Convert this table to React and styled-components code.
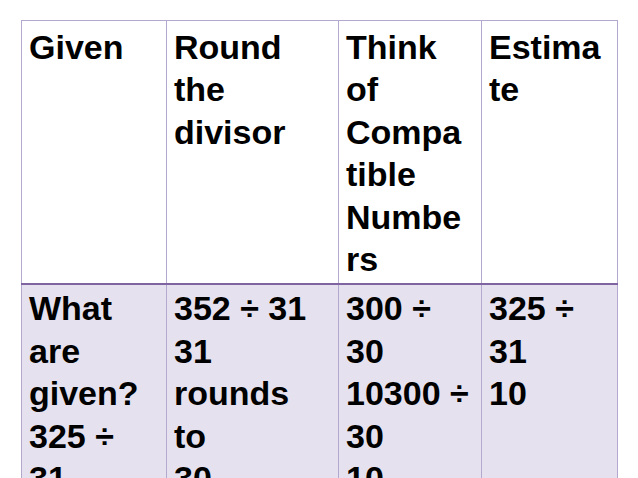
import React from "react";
import styled, { createGlobalStyle } from "styled-components";

const Global = createGlobalStyle`
  html, body { margin: 0; padding: 0; background: #ffffff; }
  body { width: 638px; height: 478px; overflow: hidden; }
`;

const Page = styled.div`
  padding: 20px 0 0 21px;
  font-family: "Liberation Sans", Arial, sans-serif;
`;

const Table = styled.table`
  border-collapse: collapse;
  table-layout: fixed;
  width: 596px;
`;

const Col = styled.col`
  width: ${(p) => p.$w}px;
`;

const Row = styled.tr`
  background: ${(p) => (p.$header ? "#ffffff" : "#e6e1ee")};
  border-bottom: ${(p) => (p.$header ? "2px solid #8064a2" : "1px solid #b4a8cf")};
`;

const Cell = styled.td`
  vertical-align: top;
  border-left: 1px solid #b4a8cf;
  border-right: 1px solid #b4a8cf;
  border-top: ${(p) => (p.$header ? "1px solid #b4a8cf" : "none")};
  padding: ${(p) => (p.$header ? "5px 7px 3px" : "2px 7px 0")};
  font-size: 34px;
  font-weight: bold;
  line-height: 42.4px;
  color: #000;
  white-space: nowrap;
  overflow: hidden;
`;

const Line = styled.span`
  display: block;
`;

const widths = [145, 172, 143, 136];

const header = [
  ["Given"],
  ["Round", "the", "divisor"],
  ["Think", "of", "Compa", "tible", "Numbe", "rs"],
  ["Estima", "te"],
];

const body = [
  ["What", "are", "given?", "325 ÷", "31"],
  ["352 ÷ 31", "31", "rounds", "to", "30"],
  ["300 ÷", "30", "10300 ÷", "30", "10"],
  ["325 ÷", "31", "10"],
];

export default function App() {
  return (
    <>
      <Global />
      <Page>
        <Table>
          <colgroup>
            {widths.map((w, i) => (
              <Col key={i} $w={w} />
            ))}
          </colgroup>
          <tbody>
            <Row $header>
              {header.map((lines, i) => (
                <Cell key={i} $header>
                  {lines.map((l, j) => (
                    <Line key={j}>{l}</Line>
                  ))}
                </Cell>
              ))}
            </Row>
            <Row>
              {body.map((lines, i) => (
                <Cell key={i}>
                  {lines.map((l, j) => (
                    <Line key={j}>{l}</Line>
                  ))}
                </Cell>
              ))}
            </Row>
          </tbody>
        </Table>
      </Page>
    </>
  );
}
